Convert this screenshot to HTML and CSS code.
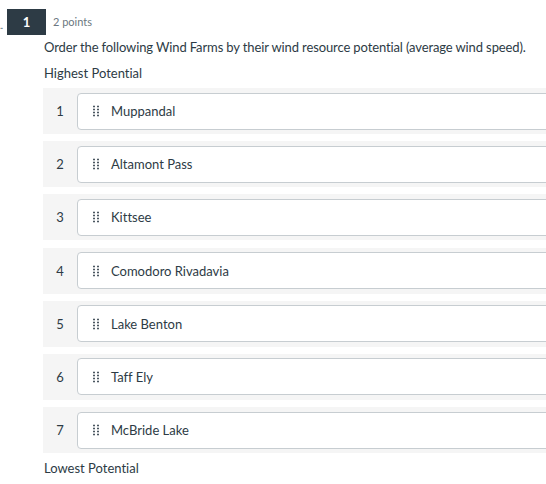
FILE: index.html
```html
<!DOCTYPE html>
<html>
<head>
<meta charset="utf-8">
<link rel="stylesheet" href="styles.css">
</head>
<body>
<div class="header">
  <span class="dots">..</span>
  <span class="badge">1</span>
  <span class="points">2 points</span>
</div>
<div class="content">
  <p class="question">Order the following Wind Farms by their wind resource potential (average wind speed).</p>
  <p class="label top">Highest Potential</p>
  <ol class="list">
    <li class="row"><span class="num">1</span><div class="box"><span class="grip"></span><span class="name">Muppandal</span></div></li>
    <li class="row"><span class="num">2</span><div class="box"><span class="grip"></span><span class="name">Altamont Pass</span></div></li>
    <li class="row"><span class="num">3</span><div class="box"><span class="grip"></span><span class="name">Kittsee</span></div></li>
    <li class="row"><span class="num">4</span><div class="box"><span class="grip"></span><span class="name">Comodoro Rivadavia</span></div></li>
    <li class="row"><span class="num">5</span><div class="box"><span class="grip"></span><span class="name">Lake Benton</span></div></li>
    <li class="row"><span class="num">6</span><div class="box"><span class="grip"></span><span class="name">Taff Ely</span></div></li>
    <li class="row"><span class="num">7</span><div class="box"><span class="grip"></span><span class="name">McBride Lake</span></div></li>
  </ol>
  <p class="label bottom">Lowest Potential</p>
</div>
</body>
</html>
```
FILE: styles.css
```css
html, body {
  margin: 0;
  padding: 0;
  background: #fff;
  overflow: hidden;
}
body {
  font-family: Lato, "Liberation Sans", sans-serif;
  font-variant-ligatures: none;
  color: #2d3b45;
  width: 546px;
  height: 484px;
}
.header {
  display: flex;
  align-items: center;
  height: 26px;
  margin-top: 9px;
}
.dots {
  width: 7px;
  font-size: 9px;
  color: #6b7780;
  line-height: 1;
  align-self: flex-end;
  padding-bottom: 5px;
  letter-spacing: -1px;
}
.badge {
  width: 39px;
  height: 26px;
  background: #2d3b45;
  color: #fff;
  font-size: 13px;
  font-weight: 700;
  display: flex;
  align-items: center;
  justify-content: center;
}
.points {
  margin-left: 7px;
  font-size: 11px;
  color: #6b7780;
  padding-bottom: 1px;
}
.content {
  margin-left: 44px;
}
.question {
  margin: 2px 0 0;
  font-size: 13px;
  line-height: 20px;
  letter-spacing: -0.12px;
  white-space: nowrap;
}
.label {
  margin: 0;
  font-size: 13px;
  line-height: 20px;
}
.label.top {
  margin-top: 6px;
}
.list {
  list-style: none;
  margin: 5px -120px 0 -1px;
  padding: 0;
  display: flex;
  flex-direction: column;
  gap: 7.2px;
}
.row {
  display: flex;
  align-items: center;
  height: 46px;
  background: #f5f5f5;
}
.num {
  width: 34px;
  text-align: center;
  font-size: 13px;
  flex: none;
}
.box {
  flex: 1;
  height: 35px;
  background: #fff;
  border: 1px solid #c7cdd1;
  border-radius: 4px;
  display: flex;
  align-items: center;
}
.grip {
  width: 7px;
  height: 12px;
  margin-left: 14px;
  background-image: radial-gradient(circle, #4a5660 0.9px, transparent 1.2px);
  background-size: 4px 3px;
  flex: none;
}
.name {
  margin-left: 12px;
  font-size: 13px;
}
.label.bottom {
  margin-top: 5px;
}
```
